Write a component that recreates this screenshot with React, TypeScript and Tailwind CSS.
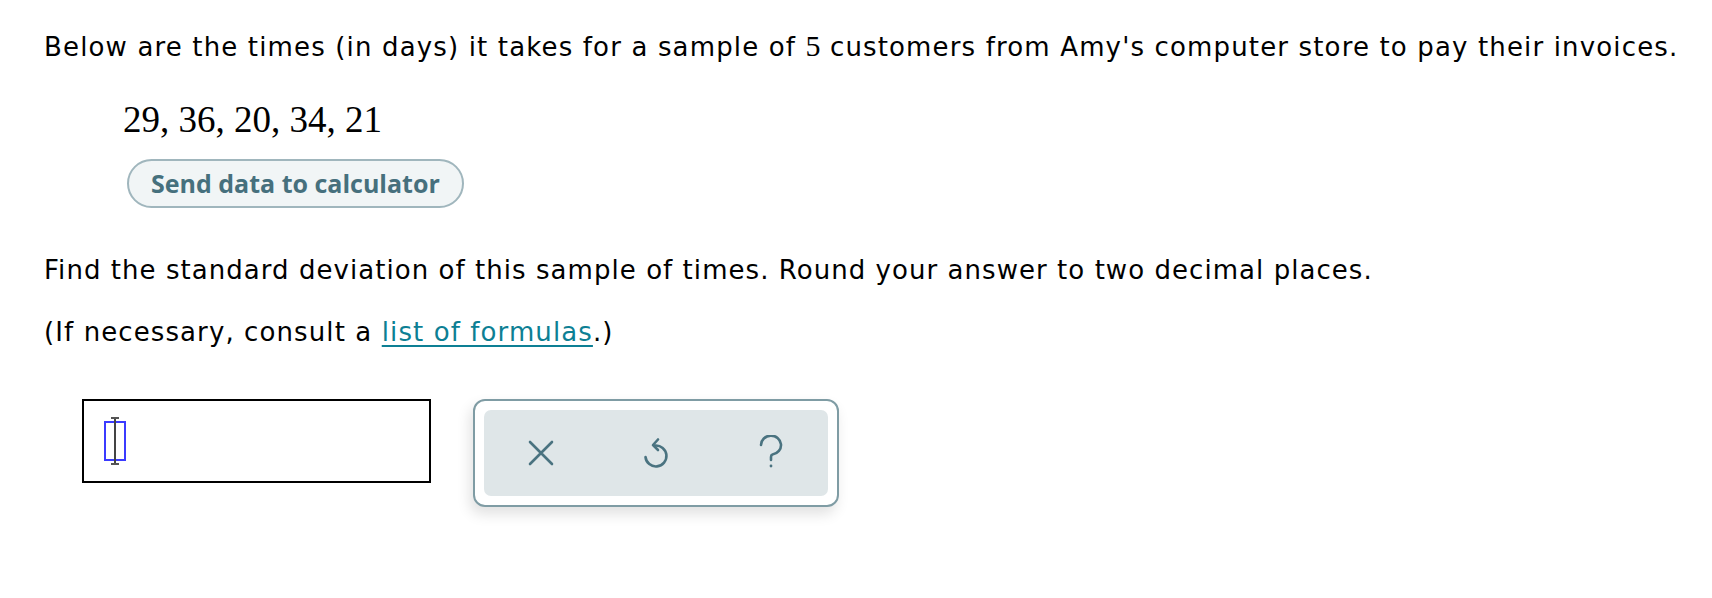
import React from "react";

function XIcon() {
  return (
    <svg width="26" height="26" viewBox="0 0 26 26" fill="none" stroke="#4a7380" strokeWidth="2.6" strokeLinecap="round">
      <path d="M2 2 L24 24 M24 2 L2 24" />
    </svg>
  );
}

function UndoIcon() {
  return (
    <svg width="28" height="32" viewBox="0 0 28 32" fill="none" stroke="#4a7380" strokeWidth="2.6" strokeLinecap="round" strokeLinejoin="round">
      <path d="M13 8.5 A10.5 10.5 0 1 1 3.5 20" />
      <path d="M16 2.5 L11 8 L16 13" />
    </svg>
  );
}

function HelpIcon() {
  return (
    <svg width="26" height="36" viewBox="0 0 26 36" fill="none" stroke="#4a7380" strokeWidth="2.6" strokeLinecap="round">
      <path d="M3 10 A10 9.5 0 1 1 14.5 19.5 Q13 20 13 22 L13 25" />
      <circle cx="13" cy="31" r="1.4" fill="#4a7380" stroke="none" />
    </svg>
  );
}

export default function App() {
  const sans = { fontFamily: '"DejaVu Sans", Verdana, sans-serif' } as const;
  return (
    <div className="w-[1712px] h-[598px] bg-white text-black overflow-hidden" style={sans}>
      <div className="pl-[44px] pt-[28px]">
        <p className="text-[26px] leading-[36px] tracking-[1.15px] whitespace-nowrap">
          Below are the times (in days) it takes for a sample of{" "}
          <span className="font-['Liberation_Serif',serif] text-[30px] tracking-normal">5</span> customers from Amy's computer store to pay their invoices.
        </p>
        <p className="mt-[35px] ml-[79px] font-['Liberation_Serif',serif] text-[37px] leading-[40px]">
          29, 36, 20, 34, 21
        </p>
        <div className="mt-[19px] ml-[83px]">
          <button className="h-[49px] px-[22px] rounded-full border-2 border-[#a0b6bd] bg-[#f1f5f6] text-[#46707d] font-['Open_Sans',sans-serif] font-bold text-[25px] leading-none">
            Send data to calculator
          </button>
        </div>
        <p className="mt-[44px] text-[26px] leading-[36px] tracking-[1.05px] whitespace-nowrap">
          Find the standard deviation of this sample of times. Round your answer to two decimal places.
        </p>
        <p className="mt-[26px] text-[26px] leading-[36px] tracking-[1.1px] whitespace-nowrap">
          (If necessary, consult a{" "}
          <a className="text-[#0d7f94] underline underline-offset-[4px] decoration-[2px]" href="#">
            list of formulas
          </a>
          .)
        </p>
        <div className="mt-[49px] ml-[38px] flex items-start gap-[42px]">
          <div className="w-[349px] h-[84px] border-2 border-black flex items-center pl-[20px]">
            <div className="relative w-[22px] h-[40px] border-2 border-[#3b3bff]">
              <div className="absolute left-1/2 -translate-x-1/2 top-[-6px] bottom-[-6px] w-[2px] bg-[#444]" />
              <div className="absolute left-1/2 -translate-x-1/2 top-[-6px] w-[8px] h-[2px] bg-[#555]" />
              <div className="absolute left-1/2 -translate-x-1/2 bottom-[-6px] w-[8px] h-[2px] bg-[#555]" />
            </div>
          </div>
          <div className="w-[366px] h-[108px] rounded-[12px] border-2 border-[#7f9ca4] bg-white p-[9px] shadow-[-3px_7px_14px_rgba(0,0,0,0.12)]">
            <div className="h-full rounded-[7px] bg-[#dfe6e8] grid grid-cols-3 items-center justify-items-center">
              <XIcon />
              <UndoIcon />
              <HelpIcon />
            </div>
          </div>
        </div>
      </div>
    </div>
  );
}
